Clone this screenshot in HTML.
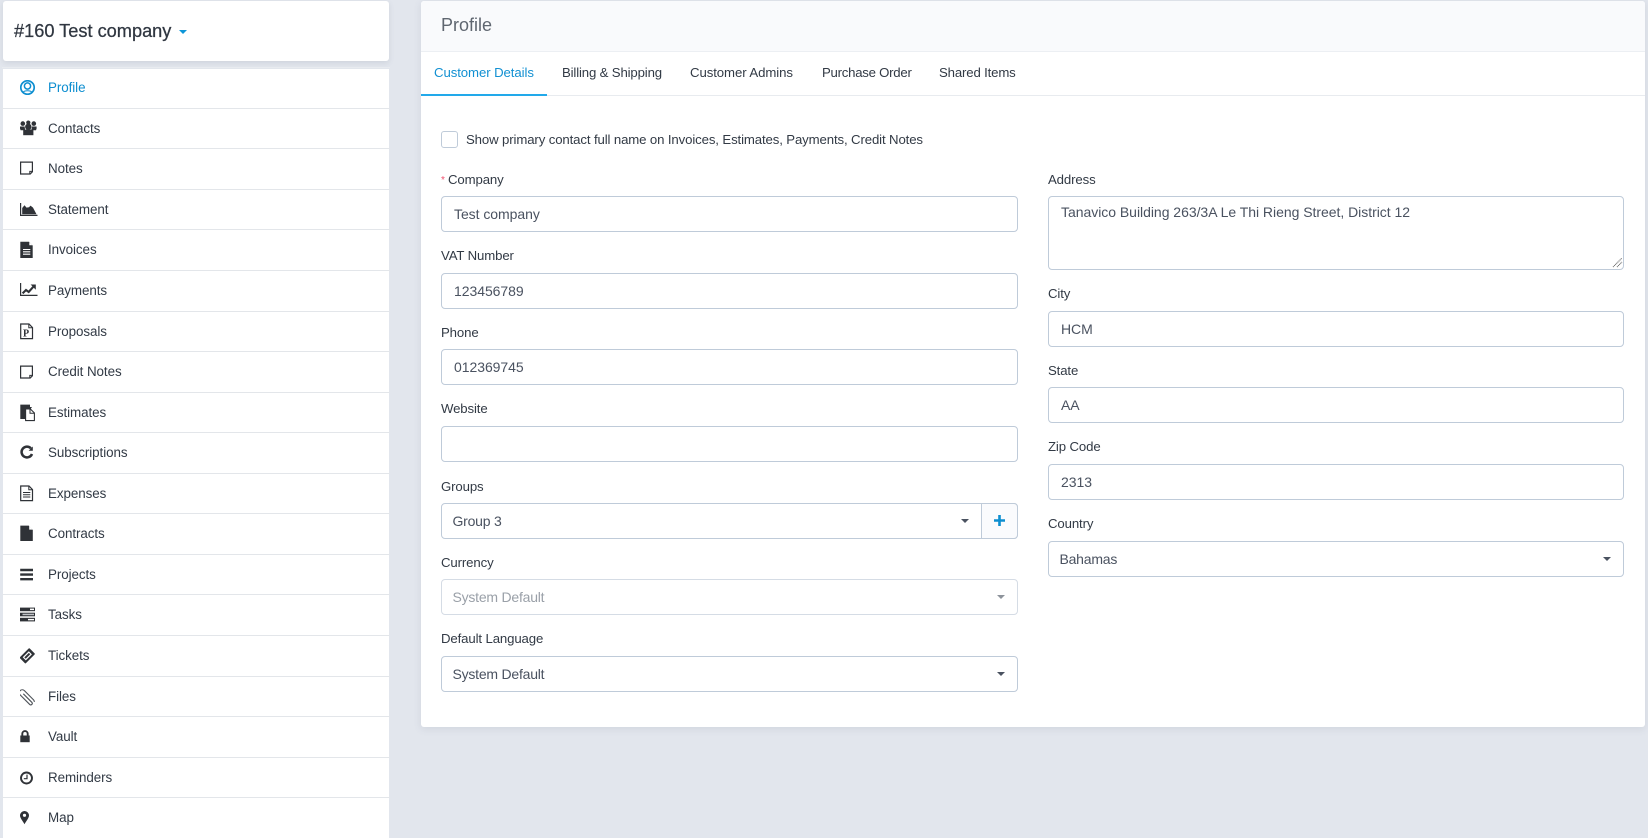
<!DOCTYPE html>
<html lang="en"><head><meta charset="utf-8"><title>Profile</title>
<style>
html,body{margin:0;padding:0;width:1648px;height:838px;overflow:hidden;background:#e2e6ed;font-family:"Liberation Sans",Arial,sans-serif;color:#323a45}
*{box-sizing:border-box}
.abs,.card,.row,.l,.i,.t,.tab,.ic{position:absolute}
.card{background:#fff;border-radius:3px}
.row{left:3px;width:386px;height:40px;font-size:13.4px;line-height:20px;letter-spacing:-.07px}
.line{position:absolute;left:2px;width:388px;height:1px;background:#e3e6ea}
.row span{position:absolute;left:45px;top:10px;white-space:nowrap}
.ic{left:20px;width:18px;height:18px}
.l{font-size:13.2px;line-height:20px;white-space:nowrap;color:#323a45;letter-spacing:-.12px}
.i{background:#fff;border:1px solid #bfcbd9;border-radius:4px;height:36px;font-size:14px;line-height:34px;padding-left:12px;color:#4a5260;white-space:nowrap;letter-spacing:-.05px}
.w1{left:441px;width:577px}
.w2{left:1048px;width:576px}
.sel{padding-left:10.5px;letter-spacing:-.22px}
.car{position:absolute;width:0;height:0;border-left:4px solid transparent;border-right:4px solid transparent;border-top:4px solid #4a5260}
.tab{top:63px;font-size:13.2px;line-height:20px;white-space:nowrap;color:#323a45;letter-spacing:-.15px}
</style></head><body>

<div class="card" style="left:3px;top:1px;width:386px;height:60px;box-shadow:0 2px 6px rgba(90,100,120,.14)"></div>
<div class="abs" style="left:14px;top:18px;font-size:18.2px;line-height:26px;white-space:nowrap;color:#2f3640;-webkit-text-stroke:.25px #2f3640">#160 Test company</div>
<div class="car" style="left:179px;top:30px;border-top-color:#0d96d8"></div>

<div class="abs" style="left:3px;top:69px;width:386px;height:769px;background:#fff"></div>
<div class="abs" style="left:2px;top:67px;width:388px;height:1px;background:#e8ebef"></div>

<div class="line" style="top:108px"></div><div class="line" style="top:148px"></div><div class="line" style="top:189px"></div><div class="line" style="top:229px"></div><div class="line" style="top:270px"></div><div class="line" style="top:311px"></div><div class="line" style="top:351px"></div><div class="line" style="top:392px"></div><div class="line" style="top:432px"></div><div class="line" style="top:473px"></div><div class="line" style="top:513px"></div><div class="line" style="top:554px"></div><div class="line" style="top:594px"></div><div class="line" style="top:635px"></div><div class="line" style="top:676px"></div><div class="line" style="top:716px"></div><div class="line" style="top:757px"></div><div class="line" style="top:797px"></div>

<div class="row" style="top:68px;color:#0d8ed0"><span>Profile</span></div>
<div class="row" style="top:109px"><span>Contacts</span></div>
<div class="row" style="top:149px"><span>Notes</span></div>
<div class="row" style="top:190px"><span>Statement</span></div>
<div class="row" style="top:230px"><span>Invoices</span></div>
<div class="row" style="top:271px"><span>Payments</span></div>
<div class="row" style="top:312px"><span>Proposals</span></div>
<div class="row" style="top:352px"><span>Credit Notes</span></div>
<div class="row" style="top:393px"><span>Estimates</span></div>
<div class="row" style="top:433px"><span>Subscriptions</span></div>
<div class="row" style="top:474px"><span>Expenses</span></div>
<div class="row" style="top:514px"><span>Contracts</span></div>
<div class="row" style="top:555px"><span>Projects</span></div>
<div class="row" style="top:595px"><span>Tasks</span></div>
<div class="row" style="top:636px"><span>Tickets</span></div>
<div class="row" style="top:677px"><span>Files</span></div>
<div class="row" style="top:717px"><span>Vault</span></div>
<div class="row" style="top:758px"><span>Reminders</span></div>
<div class="row" style="top:798px"><span>Map</span></div>

<!-- icons: svg origin x=20 -->
<svg class="ic" style="top:80px" viewBox="0 0 18 18"><circle cx="7.5" cy="7.5" r="6.7" fill="none" stroke="#0d8ed0" stroke-width="1.7"/><circle cx="7.5" cy="6" r="3.1" fill="none" stroke="#0d8ed0" stroke-width="1.5"/><path d="M3 12.2C4.5 10.2 10.5 10.2 12 12.2" fill="none" stroke="#0d8ed0" stroke-width="1"/></svg>
<svg class="ic" style="top:120px" viewBox="0 0 18 18"><g fill="#2f3237"><circle cx="2.8" cy="3.6" r="2.3"/><circle cx="13.8" cy="3.6" r="2.3"/><circle cx="8.3" cy="2.6" r="2.1"/><circle cx="8.3" cy="6.8" r="3.2"/><path d="M0 6.5H4.6L5.2 10.3H.6L0 8.5Z"/><path d="M12 6.5H16.6V8.5L16 10.3H11.4Z"/><path d="M3.2 9.6H13.4V15.2H3.2Z"/></g></svg>
<svg class="ic" style="top:161px" viewBox="0 0 18 18"><path d="M.6 1.1H12.4V10.8L10.2 13H.6Z" fill="none" stroke="#2f3237" stroke-width="1.2"/><path d="M9.8 13V10.4H12.4" fill="none" stroke="#2f3237" stroke-width="1"/></svg>
<svg class="ic" style="top:202px" viewBox="0 0 18 18"><path d="M.6 1V13.4H17.5" fill="none" stroke="#2f3237" stroke-width="1.2"/><path d="M2.2 12.3V6L4.5 3.2L6.5 5.6L9 5.2L10.5 3.6L13 5.6L16.5 12.3Z" fill="#2f3237"/></svg>
<svg class="ic" style="top:241px" viewBox="0 0 18 18"><path d="M.3 .8H9L12.7 4.5V17H.3Z" fill="#2f3237"/><path d="M9.3 1V4.2H12.5Z" fill="#fff"/><path d="M3 8.5H10.3M3 10.8H10.3M3 13.2H10.3" stroke="#fff" stroke-width="1.1"/></svg>
<svg class="ic" style="top:283px" viewBox="0 0 18 18"><path d="M.6 0V12.4H17.5" fill="none" stroke="#2f3237" stroke-width="1.2"/><path d="M2.6 10.4L6 7L8.7 9L13.5 3.6" fill="none" stroke="#2f3237" stroke-width="2.1"/><path d="M10.6 1.5H15.8V6.7Z" fill="#2f3237"/></svg>
<svg class="ic" style="top:323px" viewBox="0 0 18 18"><path d="M.7 1H9L12.5 4.6V15.6H.7Z" fill="none" stroke="#2f3237" stroke-width="1.2"/><path d="M8.8 1V4.8H12.5" fill="none" stroke="#2f3237"/><text x="3" y="13.6" font-family="Liberation Serif,serif" font-size="10" font-weight="700" fill="#2f3237">P</text></svg>
<svg class="ic" style="top:365px" viewBox="0 0 18 18"><path d="M.6 1.1H12.4V10.8L10.2 13H.6Z" fill="none" stroke="#2f3237" stroke-width="1.2"/><path d="M9.8 13V10.4H12.4" fill="none" stroke="#2f3237" stroke-width="1"/></svg>
<svg class="ic" style="top:404px" viewBox="0 0 18 18"><path d="M.3 .6H10V3H12L10 6V15H.3Z" fill="#2f3237"/><path d="M5.6 5H10.4L14.4 9V16.6H5.6Z" fill="#fff" stroke="#2f3237" stroke-width="1.1"/><path d="M10 5.2V9.3H14.2" fill="none" stroke="#2f3237"/></svg>
<svg class="ic" style="top:444px" viewBox="0 0 18 18"><path d="M10.9 4.3A5.4 5.4 0 1 0 12 10" fill="none" stroke="#2f3237" stroke-width="2.5"/><path d="M8.6 6.8H12.8V2.5Z" fill="#2f3237"/></svg>
<svg class="ic" style="top:485px" viewBox="0 0 18 18"><path d="M.7 1H9L12.5 4.6V15.6H.7Z" fill="none" stroke="#2f3237" stroke-width="1.2"/><path d="M8.8 1V4.8H12.5" fill="none" stroke="#2f3237"/><path d="M3 7.5H10.3M3 9.7H10.3M3 12H10.3" stroke="#2f3237" stroke-width="1"/></svg>
<svg class="ic" style="top:525px" viewBox="0 0 18 18"><path d="M.3 .6H8.8L12.8 5V16H.3Z" fill="#2f3237"/><path d="M9.2 .8V4.6H12.6Z" fill="#fff"/></svg>
<svg class="ic" style="top:567px" viewBox="0 0 18 18"><path d="M.2 3H13M.2 7.6H13M.2 12.2H13" stroke="#2f3237" stroke-width="2.4"/></svg>
<svg class="ic" style="top:606px" viewBox="0 0 18 18"><g fill="#2f3237"><rect x="0" y="1.6" width="15" height="3.6"/><rect x="0" y="6.7" width="15" height="3.6"/><rect x="0" y="11.8" width="15" height="3.6"/></g><rect x="10" y="2.6" width="4" height="1.5" fill="#fff"/><rect x="2.5" y="7.7" width="11.5" height="1.5" fill="#bfc2c6"/><rect x="8" y="12.9" width="6" height="1.4" fill="#fff"/></svg>
<svg class="ic" style="top:648px" viewBox="0 0 18 18"><g transform="rotate(-45 7.3 7.8)"><rect x=".4" y="3.6" width="13.8" height="8.4" rx=".8" fill="#2f3237"/><rect x="3" y="5.6" width="8.6" height="4.4" fill="#fff"/><rect x="4.1" y="6.8" width="6.4" height="2" fill="#2f3237"/></g></svg>
<svg class="ic" style="top:689px" viewBox="0 0 18 18"><g transform="rotate(45 6.5 8)" fill="none" stroke="#4d5258" stroke-width="1.1"><path d="M2 8H14A1.5 1.5 0 0 1 14 11H.5A3 3 0 0 1 .5 5H13.5A2.8 2.8 0 0 1 15.5 6"/></g></svg>
<svg class="ic" style="top:729px" viewBox="0 0 18 18"><path d="M.3 6.5H9.7V13.2H.3Z" fill="#2f3237"/><path d="M2.3 7V4.8A2.7 2.7 0 0 1 7.7 4.8V7" fill="none" stroke="#2f3237" stroke-width="1.9"/></svg>
<svg class="ic" style="top:771px" viewBox="0 0 18 18"><circle cx="6.5" cy="7" r="5.5" fill="none" stroke="#2f3237" stroke-width="1.9"/><path d="M7 3.6V7.7H3.8" fill="none" stroke="#2f3237" stroke-width="1.2"/></svg>
<svg class="ic" style="top:809px" viewBox="0 0 18 18"><path d="M4.5 2A4.5 4.5 0 0 0 0 6.5C0 9 3 12.4 4.5 15.2C6 12.4 9 9 9 6.5A4.5 4.5 0 0 0 4.5 2Z" fill="#2f3237"/><circle cx="4.5" cy="6.3" r="1.6" fill="#fff"/></svg>

<!-- main panel -->
<div class="card" style="left:421px;top:1px;width:1224px;height:726px;box-shadow:0 2px 8px rgba(90,100,120,.13)"></div>
<div class="abs" style="left:421px;top:1px;width:1224px;height:51px;background:#f9fafc;border-bottom:1px solid #eceff3;border-radius:3px 3px 0 0"></div>
<div class="abs" style="left:441px;top:13px;font-size:18px;line-height:24px;color:#5f6670">Profile</div>
<div class="abs" style="left:421px;top:95px;width:1224px;height:1px;background:#e8ebef"></div>
<div class="abs" style="left:421px;top:94px;width:126px;height:2px;background:#22a9ea"></div>
<div class="tab" style="left:434px;color:#1290d2;letter-spacing:-.08px">Customer Details</div>
<div class="tab" style="left:562px">Billing &amp; Shipping</div>
<div class="tab" style="left:690px;letter-spacing:-.08px">Customer Admins</div>
<div class="tab" style="left:822px;letter-spacing:-.25px">Purchase Order</div>
<div class="tab" style="left:939px">Shared Items</div>

<div class="abs" style="left:441px;top:131px;width:17px;height:17px;border:1px solid #bfcbd9;border-radius:3px;background:#fff"></div>
<div class="l" style="left:466px;top:130px">Show primary contact full name on Invoices, Estimates, Payments, Credit Notes</div>

<div class="abs" style="left:441px;top:174px;font-size:10px;line-height:14px;color:#f0506e">*</div>
<div class="l" style="left:448px;top:170px">Company</div>
<div class="i w1" style="top:196px">Test company</div>
<div class="l" style="left:441px;top:246px">VAT Number</div>
<div class="i w1" style="top:273px">123456789</div>
<div class="l" style="left:441px;top:323px">Phone</div>
<div class="i w1" style="top:349px">012369745</div>
<div class="l" style="left:441px;top:399px">Website</div>
<div class="i w1" style="top:426px"></div>
<div class="l" style="left:441px;top:477px">Groups</div>
<div class="i w1 sel" style="top:503px">Group 3</div>
<div class="car" style="left:961px;top:519px"></div>
<div class="abs" style="left:981px;top:503px;width:37px;height:36px;background:#fafbfd;border:1px solid #bfcbd9;border-radius:0 4px 4px 0"></div>
<svg class="abs" style="left:993px;top:514px" width="13" height="13" viewBox="0 0 13 13"><path d="M6.5 1V12M1 6.5H12" stroke="#0d8ed0" stroke-width="2.6"/></svg>
<div class="l" style="left:441px;top:553px">Currency</div>
<div class="i w1 sel" style="top:579px;border-color:#d5dce5;color:#9aa0a8">System Default</div>
<div class="car" style="left:997px;top:595px;border-top-color:#8d939b"></div>
<div class="l" style="left:441px;top:629px">Default Language</div>
<div class="i w1 sel" style="top:656px">System Default</div>
<div class="car" style="left:997px;top:672px"></div>

<div class="l" style="left:1048px;top:170px">Address</div>
<div class="i w2" style="top:196px;height:74px;line-height:31px;letter-spacing:-.03px">Tanavico Building 263/3A Le Thi Rieng Street, District 12</div>
<svg class="abs" style="left:1612px;top:257px" width="11" height="11" viewBox="0 0 11 11"><path d="M1 10L10 1M5 10L10 5" stroke="#666" stroke-width="1" stroke-dasharray="1 .6"/></svg>
<div class="l" style="left:1048px;top:284px">City</div>
<div class="i w2" style="top:311px">HCM</div>
<div class="l" style="left:1048px;top:361px">State</div>
<div class="i w2" style="top:387px">AA</div>
<div class="l" style="left:1048px;top:437px">Zip Code</div>
<div class="i w2" style="top:464px">2313</div>
<div class="l" style="left:1048px;top:514px">Country</div>
<div class="i w2 sel" style="top:541px">Bahamas</div>
<div class="car" style="left:1603px;top:557px"></div>

</body></html>
